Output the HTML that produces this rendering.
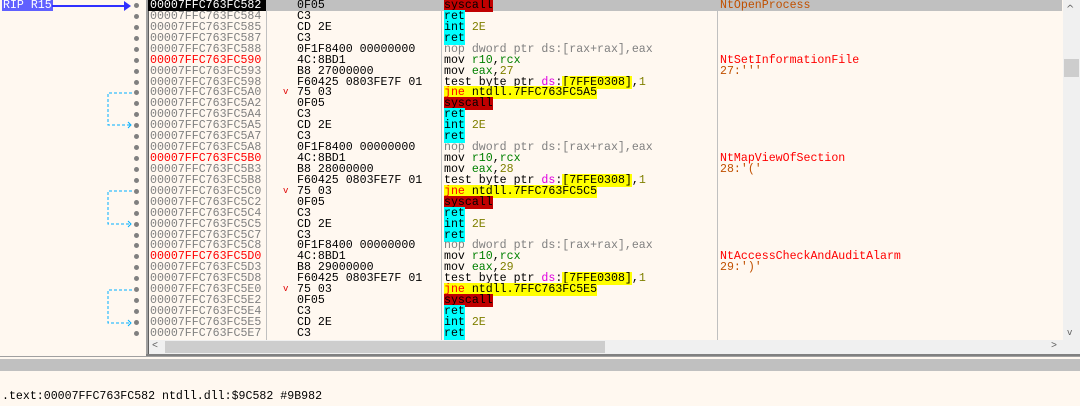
<!DOCTYPE html>
<html><head><meta charset="utf-8"><style>
*{margin:0;padding:0;box-sizing:border-box}
body{width:1080px;height:406px;background:#fff8f0;position:relative;overflow:hidden;font-family:"Liberation Mono",monospace;font-size:11.6px}
.r{position:absolute;left:0;height:10.93px;line-height:11.5px;white-space:pre;width:1062px}
.a{position:absolute;left:150px;color:#808080}
.b{position:absolute;left:297px;color:#000}
.d{position:absolute;left:444px;color:#000}
.c{position:absolute;left:720px}
.dot{position:absolute;left:134px;top:3px;width:5px;height:5px;border-radius:50%;background:#808080}
.v{position:absolute;left:283px;color:#e00000;font-size:9px}
.g{color:#808080}.gr{color:#008000}.n{color:#808000}.m{color:#e000e0}
.y{background:#ffff00}.cy{background:#00ffff}.rd{background:#c00000}
.red{color:#ff0000}.or{color:#c05000}
.vl{position:absolute;width:1px;background:#c0c0c0;top:0;height:340px}
</style></head><body>
<div style="position:absolute;left:146px;top:0;width:2px;height:356px;background:#a0a0a0"></div>
<div style="position:absolute;left:148px;top:0;width:1px;height:356px;background:#606060"></div>
<div class="vl" style="left:266px"></div>
<div class="vl" style="left:441px"></div>
<div class="vl" style="left:717px"></div>
<div style="position:absolute;left:148px;top:0;width:914px;height:11px;background:#c0c0c0"></div>
<div style="position:absolute;left:148px;top:0;width:118px;height:11px;background:#000"></div>
<div style="position:absolute;left:2px;top:0;height:11px;line-height:11px;background:#6060ff;color:#fff;padding:0 1px">RIP R15</div>
<div style="position:absolute;left:52px;top:5px;width:76px;height:2px;background:#3030ff"></div>
<div style="position:absolute;left:124px;top:1px;width:0;height:0;border-left:7px solid #3030ff;border-top:5px solid transparent;border-bottom:5px solid transparent"></div>
<svg style="position:absolute;left:0;top:0" width="146" height="340"><g fill="none" stroke="#00b0ff" stroke-dasharray="3,2">
<path d="M132 93H108V125H131"/><path d="M132 191H108V224H131"/><path d="M132 290H108V323H131"/></g>
<g fill="none" stroke="#00b0ff"><path d="M128 122l3 3-3 3"/><path d="M128 221l3 3-3 3"/><path d="M128 320l3 3-3 3"/></g></svg>

<div class="r" style="top:0"><span class="dot"></span><span class="a" style="color:#fff">00007FFC763FC582</span><span class="b">0F05</span><span class="d"><span class="rd">syscall</span></span><span class="c or">NtOpenProcess</span></div>
<div class="r" style="top:10.93px"><span class="dot"></span><span class="a">00007FFC763FC584</span><span class="b">C3</span><span class="d"><span class="cy">ret</span></span></div>
<div class="r" style="top:21.86px"><span class="dot"></span><span class="a">00007FFC763FC585</span><span class="b">CD 2E</span><span class="d"><span class="cy">int</span> <span class="n">2E</span></span></div>
<div class="r" style="top:32.79px"><span class="dot"></span><span class="a">00007FFC763FC587</span><span class="b">C3</span><span class="d"><span class="cy">ret</span></span></div>
<div class="r" style="top:43.72px"><span class="dot"></span><span class="a">00007FFC763FC588</span><span class="b">0F1F8400 00000000</span><span class="d g">nop dword ptr ds:[rax+rax],eax</span></div>
<div class="r" style="top:54.65px"><span class="dot"></span><span class="a red">00007FFC763FC590</span><span class="b">4C:8BD1</span><span class="d">mov <span class="gr">r10</span>,<span class="gr">rcx</span></span><span class="c red">NtSetInformationFile</span></div>
<div class="r" style="top:65.58px"><span class="dot"></span><span class="a">00007FFC763FC593</span><span class="b">B8 27000000</span><span class="d">mov <span class="gr">eax</span>,<span class="n">27</span></span><span class="c or">27:'''</span></div>
<div class="r" style="top:76.51px"><span class="dot"></span><span class="a">00007FFC763FC598</span><span class="b">F60425 0803FE7F 01</span><span class="d">test byte ptr <span class="m">ds</span>:<span class="y">[7FFE0308]</span>,<span class="n">1</span></span></div>
<div class="r" style="top:87.44px"><span class="dot"></span><span class="a">00007FFC763FC5A0</span><span class="v">v</span><span class="b">75 03</span><span class="d"><span class="y"><span class="red">jne</span> ntdll.7FFC763FC5A5</span></span></div>
<div class="r" style="top:98.37px"><span class="dot"></span><span class="a">00007FFC763FC5A2</span><span class="b">0F05</span><span class="d"><span class="rd">syscall</span></span></div>
<div class="r" style="top:109.3px"><span class="dot"></span><span class="a">00007FFC763FC5A4</span><span class="b">C3</span><span class="d"><span class="cy">ret</span></span></div>
<div class="r" style="top:120.23px"><span class="dot"></span><span class="a">00007FFC763FC5A5</span><span class="b">CD 2E</span><span class="d"><span class="cy">int</span> <span class="n">2E</span></span></div>
<div class="r" style="top:131.16px"><span class="dot"></span><span class="a">00007FFC763FC5A7</span><span class="b">C3</span><span class="d"><span class="cy">ret</span></span></div>
<div class="r" style="top:142.09px"><span class="dot"></span><span class="a">00007FFC763FC5A8</span><span class="b">0F1F8400 00000000</span><span class="d g">nop dword ptr ds:[rax+rax],eax</span></div>
<div class="r" style="top:153.02px"><span class="dot"></span><span class="a red">00007FFC763FC5B0</span><span class="b">4C:8BD1</span><span class="d">mov <span class="gr">r10</span>,<span class="gr">rcx</span></span><span class="c red">NtMapViewOfSection</span></div>
<div class="r" style="top:163.95px"><span class="dot"></span><span class="a">00007FFC763FC5B3</span><span class="b">B8 28000000</span><span class="d">mov <span class="gr">eax</span>,<span class="n">28</span></span><span class="c or">28:'('</span></div>
<div class="r" style="top:174.88px"><span class="dot"></span><span class="a">00007FFC763FC5B8</span><span class="b">F60425 0803FE7F 01</span><span class="d">test byte ptr <span class="m">ds</span>:<span class="y">[7FFE0308]</span>,<span class="n">1</span></span></div>
<div class="r" style="top:185.81px"><span class="dot"></span><span class="a">00007FFC763FC5C0</span><span class="v">v</span><span class="b">75 03</span><span class="d"><span class="y"><span class="red">jne</span> ntdll.7FFC763FC5C5</span></span></div>
<div class="r" style="top:196.74px"><span class="dot"></span><span class="a">00007FFC763FC5C2</span><span class="b">0F05</span><span class="d"><span class="rd">syscall</span></span></div>
<div class="r" style="top:207.67px"><span class="dot"></span><span class="a">00007FFC763FC5C4</span><span class="b">C3</span><span class="d"><span class="cy">ret</span></span></div>
<div class="r" style="top:218.6px"><span class="dot"></span><span class="a">00007FFC763FC5C5</span><span class="b">CD 2E</span><span class="d"><span class="cy">int</span> <span class="n">2E</span></span></div>
<div class="r" style="top:229.53px"><span class="dot"></span><span class="a">00007FFC763FC5C7</span><span class="b">C3</span><span class="d"><span class="cy">ret</span></span></div>
<div class="r" style="top:240.46px"><span class="dot"></span><span class="a">00007FFC763FC5C8</span><span class="b">0F1F8400 00000000</span><span class="d g">nop dword ptr ds:[rax+rax],eax</span></div>
<div class="r" style="top:251.39px"><span class="dot"></span><span class="a red">00007FFC763FC5D0</span><span class="b">4C:8BD1</span><span class="d">mov <span class="gr">r10</span>,<span class="gr">rcx</span></span><span class="c red">NtAccessCheckAndAuditAlarm</span></div>
<div class="r" style="top:262.32px"><span class="dot"></span><span class="a">00007FFC763FC5D3</span><span class="b">B8 29000000</span><span class="d">mov <span class="gr">eax</span>,<span class="n">29</span></span><span class="c or">29:')'</span></div>
<div class="r" style="top:273.25px"><span class="dot"></span><span class="a">00007FFC763FC5D8</span><span class="b">F60425 0803FE7F 01</span><span class="d">test byte ptr <span class="m">ds</span>:<span class="y">[7FFE0308]</span>,<span class="n">1</span></span></div>
<div class="r" style="top:284.18px"><span class="dot"></span><span class="a">00007FFC763FC5E0</span><span class="v">v</span><span class="b">75 03</span><span class="d"><span class="y"><span class="red">jne</span> ntdll.7FFC763FC5E5</span></span></div>
<div class="r" style="top:295.11px"><span class="dot"></span><span class="a">00007FFC763FC5E2</span><span class="b">0F05</span><span class="d"><span class="rd">syscall</span></span></div>
<div class="r" style="top:306.04px"><span class="dot"></span><span class="a">00007FFC763FC5E4</span><span class="b">C3</span><span class="d"><span class="cy">ret</span></span></div>
<div class="r" style="top:316.97px"><span class="dot"></span><span class="a">00007FFC763FC5E5</span><span class="b">CD 2E</span><span class="d"><span class="cy">int</span> <span class="n">2E</span></span></div>
<div class="r" style="top:327.9px"><span class="dot"></span><span class="a">00007FFC763FC5E7</span><span class="b">C3</span><span class="d"><span class="cy">ret</span></span></div>

<div style="position:absolute;left:1063px;top:0;width:17px;height:340px;background:#f0f0f0"></div>
<div style="position:absolute;left:1066px;top:4px;color:#606060;font-size:10px;font-family:'DejaVu Sans',sans-serif">^</div>
<div style="position:absolute;left:1064px;top:59px;width:15px;height:18px;background:#cdcdcd"></div>
<div style="position:absolute;left:1067px;top:328px;color:#606060;font-size:9px;font-family:'DejaVu Sans',sans-serif">v</div>
<div style="position:absolute;left:149px;top:340px;width:931px;height:14px;background:#f0f0f0"></div>
<div style="position:absolute;left:165px;top:341px;width:440px;height:12px;background:#cdcdcd"></div>
<div style="position:absolute;left:152px;top:340px;color:#606060;font-size:10px;line-height:14px">&lt;</div>
<div style="position:absolute;left:1051px;top:340px;color:#606060;font-size:10px;line-height:14px">&gt;</div>
<div style="position:absolute;left:146px;top:354px;width:934px;height:2px;background:#808080"></div>
<div style="position:absolute;left:0;top:356px;width:1080px;height:1px;background:#a0a0a0"></div>
<div style="position:absolute;left:0;top:359px;width:1080px;height:12px;background:#c0c0c0"></div>
<div style="position:absolute;left:2px;top:390px;line-height:14px;white-space:pre;color:#000">.text:00007FFC763FC582 ntdll.dll:$9C582 #9B982</div>
</body></html>
